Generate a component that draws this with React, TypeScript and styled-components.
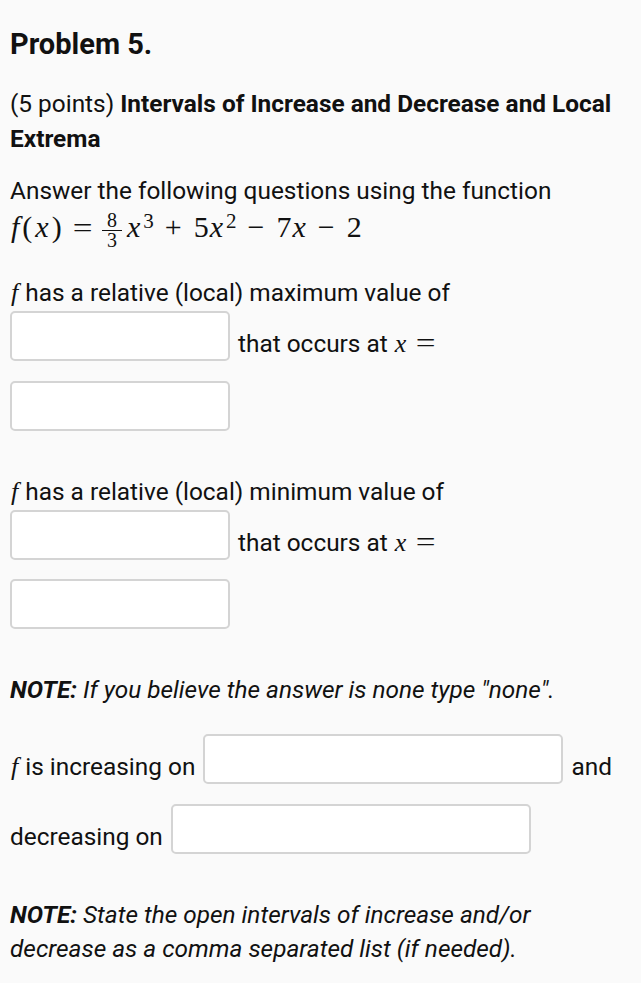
import styled, { createGlobalStyle } from 'styled-components';

type TInput = {
  $width?: number;
};

type TStack = {
  $gap?: number;
};

const GlobalStyle = createGlobalStyle`
  html, body {
    margin: 0;
    padding: 0;
    background-color: #fafafa;
  }
  body {
    font-family: Roboto, "Noto Sans", "Liberation Sans", sans-serif;
    color: #111;
  }
  * {
    box-sizing: border-box;
  }
`;

export default function App() {
  return (
    <>
      <GlobalStyle />
      <Page>
        <Title>Problem 5.</Title>
        <Lead>
          (5 points) <b>Intervals of Increase and Decrease and Local Extrema</b>
        </Lead>

        <Text>Answer the following questions using the function</Text>
        <MathLine>
          <Var>f</Var>
          <Paren>(</Paren>
          <Var>x</Var>
          <Paren>)</Paren>
          <Rel>=</Rel>
          <Frac>
            <span>8</span>
            <span>3</span>
          </Frac>
          <Var>x</Var>
          <Sup>3</Sup>
          <Bin>+</Bin>
          <Num>5</Num>
          <Var>x</Var>
          <Sup>2</Sup>
          <Bin>−</Bin>
          <Num>7</Num>
          <Var>x</Var>
          <Bin>−</Bin>
          <Num>2</Num>
        </MathLine>

        <Section>
          <Text>
            <Var>f</Var> has a relative (local) maximum value of
          </Text>
          <Stack $gap={20}>
            <Row>
              <Answer />
              <Label>
                that occurs at <Var>x</Var>
                <Rel>=</Rel>
              </Label>
            </Row>
            <Answer />
          </Stack>
        </Section>

        <Section>
          <Text>
            <Var>f</Var> has a relative (local) minimum value of
          </Text>
          <Stack $gap={19}>
            <Row>
              <Answer />
              <Label>
                that occurs at <Var>x</Var>
                <Rel>=</Rel>
              </Label>
            </Row>
            <Answer />
          </Stack>
        </Section>

        <Note>
          <b>NOTE:</b> If you believe the answer is none type "none".
        </Note>

        <Stack $gap={20}>
          <Row>
            <Label>
              <Var>f</Var> is increasing on
            </Label>
            <Answer $width={360} />
            <Label>and</Label>
          </Row>
          <Row>
            <Label>decreasing on</Label>
            <Answer $width={360} />
          </Row>
        </Stack>

        <Note>
          <b>NOTE:</b> State the open intervals of increase and/or decrease as a comma separated
          list (if needed).
        </Note>
      </Page>
    </>
  );
}

const Page = styled.div`
  width: 641px;
  min-height: 983px;
  padding: 26px 10px 20px 10px;
  background-color: #fafafa;
`;

const Title = styled.h1`
  margin: 0;
  font-size: 29px;
  font-weight: 700;
  line-height: 36px;
`;

const Lead = styled.p`
  margin: 24px 0 0 0;
  font-size: 24.4px;
  line-height: 35px;
  & > b {
    font-weight: 700;
  }
`;

const Text = styled.p`
  margin: 18px 0 0 0;
  font-size: 24.4px;
  line-height: 34px;
`;

const Var = styled.i`
  font-family: "Liberation Serif", "DejaVu Serif", serif;
  font-style: italic;
  font-size: 26px;
  padding: 0 1px;
`;

const MathLine = styled.div`
  height: 38px;
  white-space: nowrap;
  font-family: "Liberation Serif", "DejaVu Serif", serif;
  font-size: 30px;
  line-height: 38px;
  & > ${Var} {
    font-size: 30px;
  }
`;

const Paren = styled.span`
  padding: 0 2px;
`;

const Num = styled.span`
  padding-left: 1px;
`;

const Rel = styled.span`
  font-family: "Liberation Serif", "DejaVu Serif", serif;
  font-size: 27px;
  margin: 0 11px;
  display: inline-block;
  transform: scaleX(1.3);
`;

const Bin = styled.span`
  margin: 0 11px;
`;

const Sup = styled.sup`
  font-size: 21px;
  line-height: 0;
  vertical-align: 0.45em;
  margin-left: 2px;
`;

const Frac = styled.span`
  display: inline-flex;
  flex-direction: column;
  align-items: center;
  vertical-align: 10px;
  margin: 0 4px 0 1px;
  font-size: 20px;
  line-height: 17px;
  & > span:first-child {
    padding: 0 5px 1px 5px;
    border-bottom: 1px solid #111;
  }
  & > span:last-child {
    padding-top: 1px;
  }
`;

const Section = styled.section`
  margin-top: 30px;
  &:nth-of-type(2) {
    margin-top: 44px;
  }
`;

const Stack = styled.div<TStack>`
  display: flex;
  flex-direction: column;
  align-items: flex-start;
  gap: ${({ $gap }) => $gap ?? 20}px;
  margin-top: 1px;
`;

const Row = styled.div`
  display: flex;
  align-items: flex-end;
  gap: 8px;
`;

const Label = styled.span`
  font-size: 24.4px;
  line-height: 34px;
  white-space: nowrap;
`;

const Answer = styled.input.attrs({ type: 'text' })<TInput>`
  width: ${({ $width }) => $width ?? 220}px;
  height: 50px;
  margin: 0;
  padding: 0 10px;
  background-color: #fff;
  border: 2px solid #d4d4d4;
  border-radius: 5px;
  font-size: 20px;
  outline: none;
`;

const Note = styled.p`
  margin: 44px 0 27px 0;
  font-size: 24.4px;
  line-height: 34px;
  font-style: italic;
  & > b {
    font-weight: 700;
  }
`;
